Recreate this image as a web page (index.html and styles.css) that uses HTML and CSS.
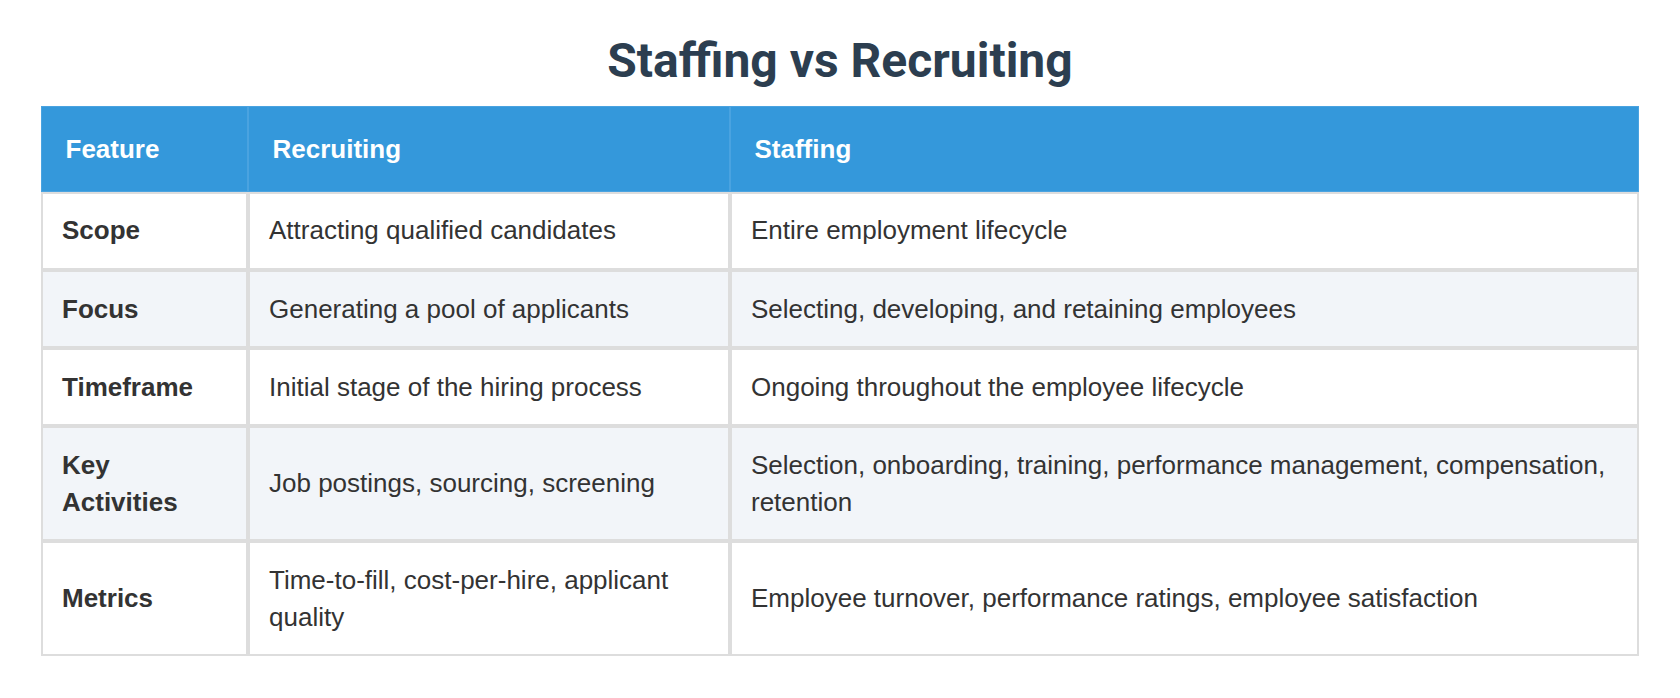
FILE: index.html
```html
<!DOCTYPE html>
<html lang="en">
<head>
<meta charset="utf-8">
<title>Staffing vs Recruiting</title>
<link rel="stylesheet" href="styles.css">
</head>
<body>
<main class="page">
  <h1 class="title">Staffing vs Recruiting</h1>
  <table class="compare">
    <colgroup>
      <col class="col-feature">
      <col class="col-recruiting">
      <col class="col-staffing">
    </colgroup>
    <thead>
      <tr>
        <th>Feature</th>
        <th>Recruiting</th>
        <th>Staffing</th>
      </tr>
    </thead>
    <tbody>
      <tr>
        <td class="label">Scope</td>
        <td>Attracting qualified candidates</td>
        <td>Entire employment lifecycle</td>
      </tr>
      <tr>
        <td class="label">Focus</td>
        <td>Generating a pool of applicants</td>
        <td>Selecting, developing, and retaining employees</td>
      </tr>
      <tr>
        <td class="label">Timeframe</td>
        <td>Initial stage of the hiring process</td>
        <td>Ongoing throughout the employee lifecycle</td>
      </tr>
      <tr>
        <td class="label">Key Activities</td>
        <td>Job postings, sourcing, screening</td>
        <td>Selection, onboarding, training, performance management, compensation, retention</td>
      </tr>
      <tr>
        <td class="label">Metrics</td>
        <td>Time-to-fill, cost-per-hire, applicant quality</td>
        <td>Employee turnover, performance ratings, employee satisfaction</td>
      </tr>
    </tbody>
  </table>
</main>
</body>
</html>
```

FILE: styles.css
```css
html, body {
  margin: 0;
  padding: 0;
  background: #ffffff;
}

.page {
  padding-top: 33px;
  font-family: "Liberation Sans", Arial, sans-serif;
  color: #333333;
}

.title {
  margin: 0 0 17px 0;
  font-family: Roboto, "Liberation Sans", sans-serif;
  font-weight: 700;
  font-size: 48px;
  line-height: 56px;
  color: #2c3e50;
  text-align: center;
}

.compare {
  width: 1598px;
  margin: 0 auto;
  border-collapse: separate;
  border-spacing: 0;
  table-layout: fixed;
  font-size: 26px;
  line-height: 36.5px;
}

.col-feature { width: 207px; }
.col-recruiting { width: 482px; }

.compare th {
  background: #3498db;
  color: #ffffff;
  font-weight: 700;
  text-align: left;
  padding: 23.5px 23.5px;
  border: 1px solid #4aa3e0;
}

.compare td {
  padding: 18.9px 19px;
  border: 2px solid #dddddd;
  vertical-align: middle;
  text-align: left;
}

.compare tbody tr:nth-child(even) td {
  background: #f2f5f9;
}

.compare td.label {
  font-weight: 700;
}
```
